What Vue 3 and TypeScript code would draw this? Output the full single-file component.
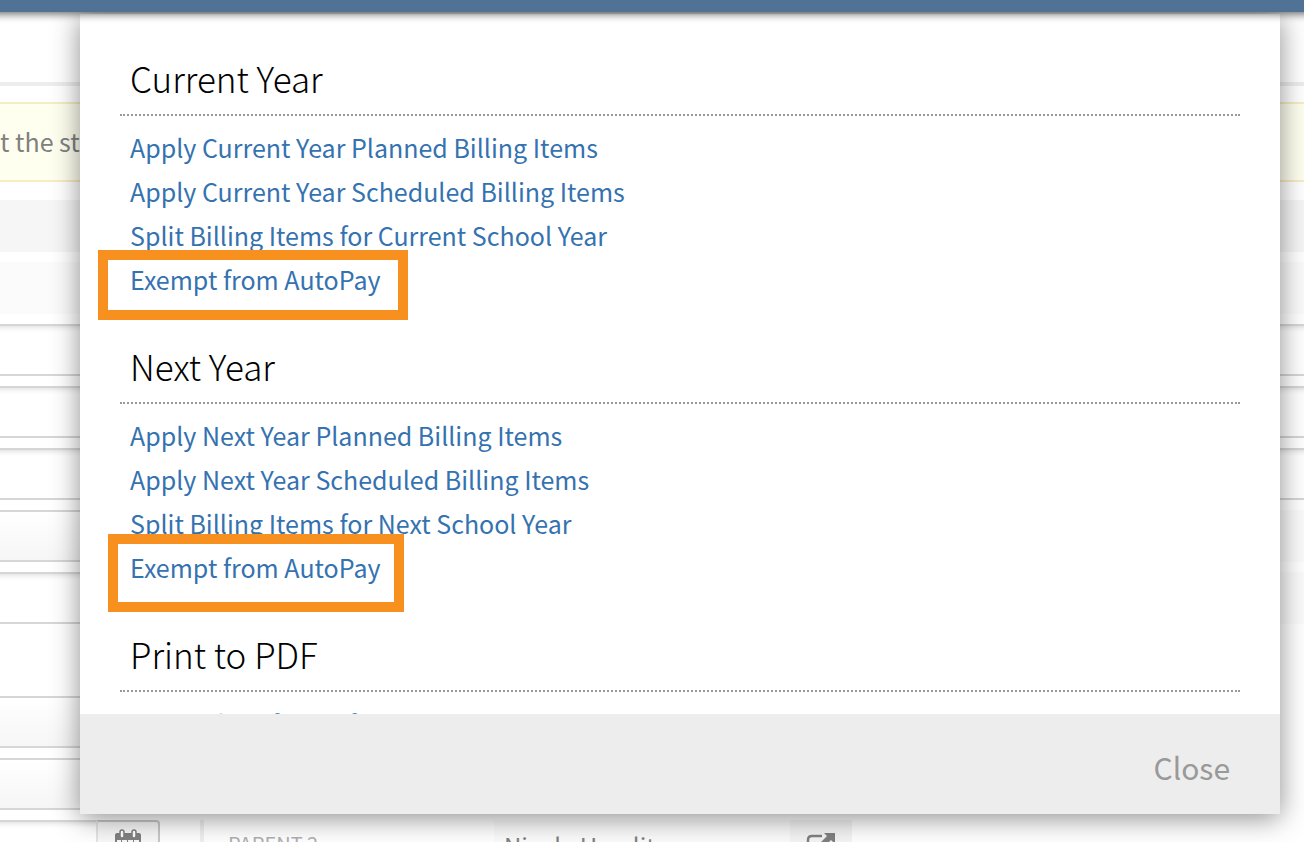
<script setup lang="ts">
interface Section {
  title: string
  links: { text: string; mark?: string }[]
}

const sections: Section[] = [
  {
    title: 'Current Year',
    links: [
      { text: 'Apply Current Year Planned Billing Items' },
      { text: 'Apply Current Year Scheduled Billing Items' },
      { text: 'Split Billing Items for Current School Year' },
      { text: 'Exempt from AutoPay', mark: 'mark-wide' },
    ],
  },
  {
    title: 'Next Year',
    links: [
      { text: 'Apply Next Year Planned Billing Items' },
      { text: 'Apply Next Year Scheduled Billing Items' },
      { text: 'Split Billing Items for Next School Year' },
      { text: 'Exempt from AutoPay', mark: 'mark-tall' },
    ],
  },
  {
    title: 'Print to PDF',
    links: [{ text: 'Schedules of Dues for Year' }],
  },
]

type Kind = 'input' | 'select' | 'blank' | 'band'
const leftFields: Kind[] = ['input', 'input', 'input', 'select', 'input', 'blank', 'select', 'select']
const rightFields: Kind[] = ['input', 'input', 'input', 'band', 'band']
</script>

<template>
  <div class="page">
    <header class="topbar"></header>
    <main class="backdrop">
      <div class="tabs"></div>
      <p class="notice">t the student</p>
      <div class="band band-head"></div>
      <div class="band"></div>
      <div class="columns">
        <div class="left">
          <template v-for="(kind, i) in leftFields" :key="i">
            <input v-if="kind === 'input'" class="field" type="text" :aria-label="`Field ${i + 1}`" />
            <select v-else-if="kind === 'select'" class="field select" :aria-label="`Choice ${i + 1}`"></select>
            <div v-else class="row"></div>
          </template>
          <div class="date">
            <input class="field" type="text" aria-label="Date" />
            <button class="cal" type="button" aria-label="Open calendar">
              <svg width="28" height="30" viewBox="0 0 28 30">
                <path fill="#808080" d="M3 4h22q2 0 2 2v24H1V6q0-2 2-2z" />
                <rect x="6" y="1" width="4" height="8" rx="2" fill="#fff" stroke="#808080" stroke-width="1.5" />
                <rect x="18" y="1" width="4" height="8" rx="2" fill="#fff" stroke="#808080" stroke-width="1.5" />
                <path fill="#f8f8f8" d="M3 11h4v5H3zM8 11h5v5H8zM14 11h5v5h-5zM20 11h5v5h-5zM3 18h4v5H3zM8 18h5v5H8zM14 18h5v5h-5zM20 18h5v5h-5z" />
              </svg>
            </button>
          </div>
        </div>
        <div class="middle">
          <span class="label">PARENT 2</span>
          <span class="value">Nicole Hamlit</span>
          <button class="open" type="button" aria-label="Open parent">
            <svg width="32" height="30" viewBox="0 0 32 30">
              <path d="M17 4H7Q3 4 3 8v14q0 4 4 4h14q4 0 4-4v-5" fill="none" stroke="#808080" stroke-width="2.5" />
              <path d="M19 1h11v11l-4-4-9 9-4-4 9-9z" fill="#808080" />
            </svg>
          </button>
        </div>
        <div class="right">
          <template v-for="(kind, i) in rightFields" :key="i">
            <input v-if="kind === 'input'" class="field" type="text" :aria-label="`Detail ${i + 1}`" />
            <div v-else class="row band"></div>
          </template>
        </div>
      </div>
    </main>

    <section class="modal" role="dialog" aria-label="Billing actions">
      <div class="body">
        <section v-for="s in sections" :key="s.title" class="group">
          <h2>{{ s.title }}</h2>
          <ul>
            <li v-for="l in s.links" :key="l.text">
              <a href="#">{{ l.text }}</a>
              <span v-if="l.mark" class="mark" :class="l.mark"></span>
            </li>
          </ul>
        </section>
      </div>
      <footer>
        <button class="close" type="button">Close</button>
      </footer>
    </section>
  </div>
</template>

<style>
body {
  margin: 0;
}
</style>

<style scoped>
.page {
  position: relative;
  height: 100vh;
  overflow: hidden;
  background: #fff;
  color: #808080;
  font-family: "Noto Sans CJK SC", "Noto Sans", sans-serif;
  font-size: 25px;
}
.page * {
  box-sizing: border-box;
}
.topbar {
  position: relative;
  z-index: 3;
  height: 12px;
  margin: 0 -12px;
  background: #507295;
  box-shadow: 0 2px 8px rgba(0, 0, 0, 0.6);
}
.tabs {
  height: 74px;
  border-bottom: 4px solid #ededed;
}
.notice {
  height: 80px;
  margin: 16px 0 18px;
  border: 2px solid #f5edc4;
  border-width: 2px 0;
  background: #fffff0;
  line-height: 74px;
  white-space: nowrap;
}
.band {
  height: 52px;
  margin-bottom: 10px;
  background: #fbfbfb;
}
.band-head {
  background: #f6f6f6;
}
.columns {
  display: flex;
  align-items: flex-start;
  justify-content: space-between;
}
.left,
.right {
  display: flex;
  flex-direction: column;
  gap: 10px;
  width: 160px;
}
.row {
  height: 52px;
  margin: 0;
}
.field {
  display: block;
  width: 100%;
  height: 52px;
  border: 2px solid #d6d6d6;
  border-width: 2px 0;
  border-radius: 0;
  background: #fff;
  box-shadow: inset 0 6px 6px -6px rgba(0, 0, 0, 0.2);
}
.select {
  appearance: none;
  background: linear-gradient(#fff, #f6f6f6);
  box-shadow: none;
}
.date {
  display: flex;
}
.date .field {
  flex: 1;
  min-width: 0;
}
.cal {
  display: flex;
  justify-content: center;
  align-items: flex-start;
  width: 64px;
  height: 52px;
  padding: 7px 0 0;
  border: 2px solid #c8c8c8;
  border-left-color: #e4e4e4;
  border-radius: 0 4px 4px 0;
  background: #f8f8f8;
}
.middle {
  display: flex;
  flex: 1;
  align-self: flex-end;
  height: 52px;
  margin-left: 40px;
  border-left: 4px solid #f0f0f0;
}
.label {
  width: 290px;
  padding-left: 24px;
  color: #b0b0b0;
  font-size: 20px;
  line-height: 48px;
}
.value {
  width: 296px;
  padding-left: 10px;
  background: #fbfbfb;
  font-size: 24px;
  line-height: 52px;
}
.open {
  display: flex;
  justify-content: center;
  align-items: flex-start;
  width: 62px;
  padding: 12px 0 0;
  border: 0;
  background: #f4f4f4;
}
.modal {
  position: absolute;
  z-index: 2;
  inset: 14px 24px 28px 80px;
  display: flex;
  flex-direction: column;
  background: #fff;
  box-shadow: 0 4px 26px rgba(0, 0, 0, 0.45);
}
.body {
  flex: 1;
  min-height: 0;
  padding: 34px 40px 0;
  overflow: hidden;
}
.group {
  margin-bottom: 36px;
}
h2 {
  margin: 0;
  padding: 0 10px 6px;
  border-bottom: 2px dotted #999;
  color: #000;
  font-size: 35px;
  font-weight: 300;
  line-height: 60px;
}
ul {
  margin: 0;
  padding: 8px 10px 0;
  list-style: none;
}
li {
  position: relative;
  height: 44px;
  line-height: 46px;
}
a {
  color: #3572b0;
  text-decoration: none;
}
.mark {
  position: absolute;
  border: 10px solid #f7901e;
  pointer-events: none;
}
.mark-wide {
  top: -6px;
  left: -32px;
  width: 310px;
  height: 70px;
}
.mark-tall {
  top: -10px;
  left: -22px;
  width: 296px;
  height: 78px;
}
footer {
  display: flex;
  align-items: center;
  justify-content: flex-end;
  height: 100px;
  padding: 6px 50px 0;
  background: #ededed;
}
.close {
  padding: 0;
  border: 0;
  background: none;
  color: #999;
  font: inherit;
  font-size: 30px;
  line-height: 40px;
}
</style>
